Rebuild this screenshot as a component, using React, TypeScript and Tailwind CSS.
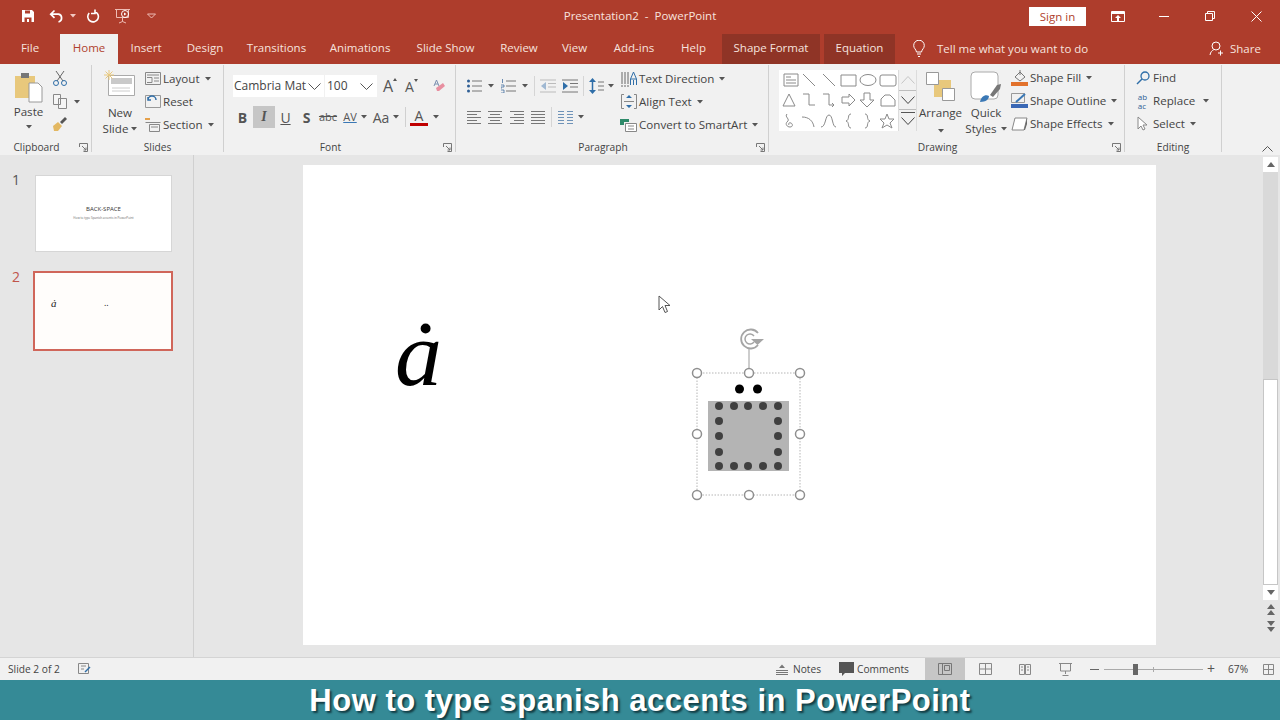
import type { ReactNode } from 'react';

const FONT = { fontFamily: '"Open Sans", "Noto Sans", sans-serif' };

const TABS = [
    { label: 'File', cls: 'w-[60px]' },
    { label: 'Home', cls: 'w-[58px] bg-[#f1f1f1] text-[#b03f2d] mr-[1px]' },
    { label: 'Insert', cls: 'w-[54px] mr-[2px]' },
    { label: 'Design', cls: 'w-[60px] mr-[2px]' },
    { label: 'Transitions', cls: 'w-[79px] mr-[2px]' },
    { label: 'Animations', cls: 'w-[84px] mr-[2px]' },
    { label: 'Slide Show', cls: 'w-[83px] mr-[2px]' },
    { label: 'Review', cls: 'w-[60px] mr-[1px]' },
    { label: 'View', cls: 'w-[49px] mr-[2px]' },
    { label: 'Add-ins', cls: 'w-[66px] mr-[2px]' },
    { label: 'Help', cls: 'w-[49px] mr-[4px]' },
    { label: 'Shape Format', cls: 'w-[98px] bg-[#8f3426] mr-[4px]' },
    { label: 'Equation', cls: 'w-[71px] bg-[#8f3426]' },
];

function Caret({ className = '', color = '#555' }: { className?: string; color?: string }) {
    return (
        <svg width="6" height="4" viewBox="0 0 6 4" className={`shrink-0 ${className}`}>
            <path d="M0 0h6L3 3.5z" fill={color} />
        </svg>
    );
}

function Launcher() {
    return (
        <svg width="9" height="9" viewBox="0 0 9 9" className="absolute right-[3px] bottom-0" fill="none" stroke="#777">
            <path d="M.5 4V.5H8.5V8.5H4.5M3 3l4 4M4.5 7H7V4.5" />
        </svg>
    );
}

function Group({ label, className, children, launcher }: { label: string; className: string; children: ReactNode; launcher?: boolean }) {
    return (
        <div className={`relative shrink-0 h-[87px] mt-[1px] border-r border-[#d0d0d0] flex flex-col ${className}`}>
            <div className="h-[75px] shrink-0 flex">{children}</div>
            <div className={`h-[15px] shrink-0 text-center text-[10.2px] leading-[15px] text-[#444] ${launcher ? 'pr-[18px]' : ''}`}>{label}</div>
            {launcher && <Launcher />}
        </div>
    );
}

function ListRow({ icon, label, caret = true, caretCls = 'ml-[5px]' }: { icon: ReactNode; label: string; caret?: boolean; caretCls?: string }) {
    return (
        <div className="h-[23px] flex items-center text-[11.6px] text-[#444] whitespace-nowrap">
            <span className="w-[19px] h-[18px] mr-[1px] flex items-center justify-center shrink-0">{icon}</span>
            <span>{label}</span>
            {caret && <Caret className={caretCls} />}
        </div>
    );
}

function Svg({ w, h, children, className = '' }: { w: number; h: number; children: ReactNode; className?: string }) {
    return (
        <svg width={w} height={h} viewBox={`0 0 ${w} ${h}`} fill="none" className={`shrink-0 ${className}`}>
            {children}
        </svg>
    );
}

function TitleBar() {
    return (
        <div className="h-[32px] flex items-center text-white">
            <div className="w-[400px] flex items-center pl-[21px]">
                <Svg w={14} h={14}>
                    <path d="M1 1h10l2 2v10H1z" fill="#fff" />
                    <path d="M4 1.5h5v3H4z" fill="#b03f2d" />
                    <path d="M3.5 8.5h7V13h-7z" fill="#b03f2d" />
                    <path d="M6 10h2v3H6z" fill="#fff" />
                </Svg>
                <Svg w={16} h={14} className="ml-[14px]">
                    <path d="M5.5 1.5L1.7 5.2l3.8 3.7M2 5.2h7.5a4 4 0 0 1 0 7.8" stroke="#fff" strokeWidth="1.7" />
                </Svg>
                <Caret className="ml-[5px]" color="#f2c9c2" />
                <Svg w={14} h={14} className="ml-[10px]">
                    <path d="M8.5 2.5A5.3 5.3 0 1 1 3.2 4M9 .5v4H5" stroke="#fff" strokeWidth="1.6" />
                </Svg>
                <Svg w={18} h={16} className="ml-[14px]">
                    <path d="M1 1.5h15M2.500 1.500v8h12v-8M8.500 9.500v4M5 15l3.500-1.500L12 15" stroke="#eebcb4" />
                    <circle cx="11" cy="6" r="3.5" stroke="#fff" />
                    <path d="M10 4.500l2.500 1.500-2.500 1.500z" fill="#fff" />
                </Svg>
                <Svg w={9} h={6} className="ml-[15px]">
                    <path d="M.5 1h8L4.500 5z" stroke="#eebcb4" />
                </Svg>
            </div>
            <div className="flex-1 text-center text-[11.5px] whitespace-pre text-[#f8e3df]">Presentation2  -  PowerPoint</div>
            <div className="w-[400px] flex items-center pl-[149px]">
                <div className="w-[57px] h-[19px] bg-white text-[#b03f2d] text-[11.5px] leading-[19px] text-center">Sign in</div>
                <Svg w={14} h={11} className="ml-[25px]">
                    <path d="M.5.5h13v10H.5z" stroke="#fff" />
                    <path d="M1 1h12v2H1zM7 4l3 3H8v3H6V7H4z" fill="#fff" />
                </Svg>
                <div className="w-[10px] h-[1px] bg-white ml-[34px]" />
                <Svg w={10} h={10} className="ml-[36px]">
                    <path d="M2.5 2.5V.5h7v7h-2M.5 2.5h7v7h-7z" stroke="#fff" />
                </Svg>
                <Svg w={11} h={11} className="ml-[36px]">
                    <path d="M.5.5l10 10M10.5.5l-10 10" stroke="#fff" />
                </Svg>
            </div>
        </div>
    );
}

function TabBar() {
    return (
        <div className="h-[32px] flex items-end text-[11.5px] text-[#f6e3df]">
            {TABS.map(tab => (
                <div key={tab.label} className={`h-[30px] leading-[28px] text-center shrink-0 ${tab.cls}`}>
                    {tab.label}
                </div>
            ))}
            <div className="h-[30px] flex items-center pb-[1px] pl-[18px]">
                <Svg w={12} h={18}>
                    <path d="M3.500 12C3 9 .7 8.500.7 5.500a5.300 5.300 0 0 1 10.600 0C11.300 8.500 9 9 8.500 12zM4 14h4M5 16.500h2" stroke="#fff" />
                </Svg>
                <span className="ml-[12px] w-[272px]">Tell me what you want to do</span>
                <Svg w={15} h={15}>
                    <circle cx="7" cy="5" r="4" stroke="#fff" />
                    <path d="M1 14c.5-3 2-4.500 3.500-5M9 12h5M11.500 9.500v5" stroke="#fff" />
                </Svg>
                <span className="ml-[6px]">Share</span>
            </div>
        </div>
    );
}

function FontRows() {
    return (
        <div className="pl-[9px] pt-[10px]">
            <div className="h-[22px] flex items-center">
                <div className="w-[91px] h-[22px] bg-white flex items-center justify-between px-[1px] text-[12px] text-[#444]">
                    <span>Cambria Mat</span>
                    <Svg w={13} h={7} className="mr-[2px]"><path d="M.5.5l6 6 6-6" stroke="#555" /></Svg>
                </div>
                <div className="w-[52px] h-[22px] ml-[1px] bg-white flex items-center justify-between px-[2px] text-[12px] text-[#444]">
                    <span>100</span>
                    <Svg w={13} h={7} className="mr-[2px]"><path d="M.5.5l6 6 6-6" stroke="#555" /></Svg>
                </div>
                <span className="ml-[6px] w-[20px] flex items-start text-[16px] text-[#555]">
                    A<Svg w={4} h={3} className="mt-[4px]"><path d="M0 3h4L2 0z" fill="#555" /></Svg>
                </span>
                <span className="ml-[2px] w-[20px] flex items-start text-[14px] text-[#555]">
                    A<Svg w={4} h={3} className="mt-[3px]"><path d="M0 0h4L2 3z" fill="#555" /></Svg>
                </span>
                <Svg w={14} h={14} className="ml-[7px]">
                    <path d="M2 7l2.500-6L7 7M3 5h3" stroke="#7a8fb0" />
                    <path d="M4 9l7-5 2 3-6 5H5z" fill="#e88fa0" />
                </Svg>
            </div>
            <div className="h-[22px] mt-[9px] flex items-center text-[#555] text-[14px]">
                <span className="w-[21px] ml-[-1px] text-center font-bold">B</span>
                <span className="w-[22px] h-[22px] leading-[22px] bg-[#c6c6c6] text-center italic font-bold" style={{ fontFamily: '"Liberation Serif", serif' }}>I</span>
                <span className="w-[21px] text-center underline">U</span>
                <span className="w-[21px] text-center font-bold">S</span>
                <span className="w-[22px] text-center text-[11px] line-through">abc</span>
                <span className="w-[22px] text-center text-[11px] underline decoration-[#3a78b5]">AV</span>
                <Caret />
                <span className="w-[24px] ml-[2px] text-center text-[14px]">Aa</span>
                <Caret />
                <span className="w-[1px] h-[20px] ml-[6px] mr-[4px] bg-[#d0d0d0]" />
                <span className="w-[18px] text-center leading-[15px] text-[14px] border-b-[3px] border-[#c00000]">A</span>
                <Caret className="ml-[5px]" />
            </div>
        </div>
    );
}

function Lines({ kind }: { kind: 'left' | 'center' | 'right' | 'justify' }) {
    const rows = [0, 1, 2, 3, 4];
    return (
        <Svg w={14} h={13}>
            {rows.map(i => {
                const short = i % 2 === 1 && kind !== 'justify';
                const x1 = short && kind === 'right' ? 4 : short && kind === 'center' ? 2 : 0;
                const x2 = short && kind === 'left' ? 10 : short && kind === 'center' ? 12 : 14;
                return <path key={i} d={`M${x1} ${i * 3 + 0.5}H${x2}`} stroke="#777" />;
            })}
        </Svg>
    );
}

function ParagraphRows() {
    return (
        <div className="w-[156px] shrink-0 pl-[11px] pt-[10px]">
            <div className="h-[22px] flex items-center">
                <Svg w={15} h={14}>
                    <path d="M5 2h10M5 7h10M5 12h10" stroke="#777" />
                    <circle cx="1.5" cy="2" r="1.5" fill="#2f5f95" />
                    <circle cx="1.5" cy="7" r="1.5" fill="#2f5f95" />
                    <circle cx="1.5" cy="12" r="1.5" fill="#2f5f95" />
                </Svg>
                <Caret className="ml-[6px]" />
                <Svg w={15} h={14} className="ml-[7px]">
                    <path d="M5 2h10M5 7h10M5 12h10" stroke="#777" />
                    <path d="M1.500 0v4M0 6h3v2H0v2M0 11h3v3H0" stroke="#2f5f95" strokeWidth=".7" />
                </Svg>
                <Caret className="ml-[6px]" />
                <span className="w-[1px] h-[20px] shrink-0 bg-[#d5d5d5] ml-[6px]" />
                <Svg w={16} h={14} className="ml-[5px]">
                    <path d="M0 1h16M8 4.500h8M8 8h8M0 13h16" stroke="#bbb" />
                    <path d="M6 3v8L1 7z" fill="#9fb8d2" />
                </Svg>
                <Svg w={16} h={14} className="ml-[6px]">
                    <path d="M0 1h16M8 4.500h8M8 8h8M0 13h16" stroke="#777" />
                    <path d="M1 3v8l5-4z" fill="#2f6ea8" />
                </Svg>
                <span className="w-[1px] h-[20px] shrink-0 bg-[#d5d5d5] ml-[5px]" />
                <Svg w={15} h={16} className="ml-[5px]">
                    <path d="M3.500 2v12" stroke="#2f6ea8" strokeWidth="1.5" />
                    <path d="M0 4l3.500-4L7 4zM0 12l3.500 4L7 12z" fill="#2f6ea8" />
                    <path d="M9 4h6M9 8h6M9 12h6" stroke="#777" />
                </Svg>
                <Caret className="ml-[4px]" />
            </div>
            <div className="h-[22px] mt-[9px] flex items-center">
                <Lines kind="left" />
                <span className="ml-[7px] flex"><Lines kind="center" /></span>
                <span className="ml-[8px] flex"><Lines kind="right" /></span>
                <span className="ml-[7px] flex"><Lines kind="justify" /></span>
                <span className="w-[1px] h-[20px] shrink-0 bg-[#d5d5d5] ml-[6px]" />
                <Svg w={15} h={13} className="ml-[6px]">
                    <path d="M0 .5h6M9 .5h6M0 3.500h6M9 3.500h6M0 6.500h6M9 6.500h6M0 9.500h6M9 9.500h6M0 12.500h6M9 12.500h6" stroke="#6f93b8" />
                </Svg>
                <Caret className="ml-[5px]" />
            </div>
        </div>
    );
}

const SHAPES = [
    'M3 2h14v12H3zM5 5h5M5 8h10M5 11h10',
    'M3 2l12 12',
    'M3 2l12 12',
    'M1 3h15v11H1z',
    'M1 8a8 5.500 0 1 0 16 0a8 5.500 0 1 0-16 0',
    'M3 3h12a2 2 0 0 1 2 2v7a2 2 0 0 1-2 2H3a2 2 0 0 1-2-2V5a2 2 0 0 1 2-2z',
    'M8 2l6 12H2z',
    'M3 2h6v11h6',
    'M3 2h6v11h5M12 11l2 2-2 2',
    'M2 5h7V2l6 6-6 6v-3H2z',
    'M5 1h6v7h4l-7 7-7-7h4z',
    'M6 3h5l5 5v6H2V7z',
    'M6 1C3 4 10 6 6 9c-2 2 0 5 3 5s3-3 1-4-3 1-2 2',
    'M2 4c7 0 11 4 12 10',
    'M1 14C6 14 5 2 9 2s3 12 7 12',
    'M11 1C7 1 10 7 6 8c4 1 1 7 5 7',
    'M6 1c4 0 1 6 5 7-4 1-1 7-5 7',
    'M8 1l2 5h5l-4 4 2 5-5-3-5 3 2-5-4-4h5z',
];

function ShapeGallery() {
    return (
        <div className="ml-[10px] mt-[5px] w-[138px] h-[61px] bg-white flex">
            <div className="w-[119px] grid grid-cols-6 grid-rows-3 pl-[1px]">
                {SHAPES.map((d, i) => (
                    <div key={i} className="flex items-center justify-center">
                        <svg width="18" height="16" viewBox="0 0 18 16" fill="none">
                            <path d={d} stroke="#8a8a8a" />
                        </svg>
                    </div>
                ))}
            </div>
            <div className="w-[19px] bg-[#f1f1f1] border-x border-[#dcdcdc] flex flex-col">
                <div className="h-[20px] flex items-center justify-center">
                    <Svg w={14} h={8}><path d="M.5 7.500l6.500-7 6.500 7" stroke="#c5c5c5" /></Svg>
                </div>
                <div className="h-[20px] flex items-center justify-center border-y border-[#bdbdbd]">
                    <Svg w={14} h={8}><path d="M.5.500l6.500 7 6.500-7" stroke="#444" /></Svg>
                </div>
                <div className="h-[21px] flex flex-col items-center pt-[2px]">
                    <div className="w-[14px] h-[1px] bg-[#555] mb-[4px]" />
                    <Svg w={14} h={8}><path d="M.5.500l6.500 7 6.500-7" stroke="#444" /></Svg>
                </div>
            </div>
        </div>
    );
}

function Ribbon() {
    return (
        <div className="h-[91px] bg-[#f1f1f1] flex relative">
            <Group label="Clipboard" className="w-[92px]" launcher>
                <div className="w-[53px] flex flex-col items-center text-[11.6px] text-[#444] pl-[4px]">
                    <Svg w={30} h={31} className="mt-[7px]">
                        <path d="M1 4h20v22H1z" fill="#e8c87c" />
                        <path d="M7 1h8v5H7z" fill="#777" />
                        <path d="M15 11h9l4 4v15H15z" fill="#fff" stroke="#999" />
                    </Svg>
                    <div className="mt-[1px] leading-[16px]">Paste</div>
                    <Caret className="mt-[5px]" />
                </div>
                <div className="flex flex-col pt-[6px] gap-[8px]">
                    <Svg w={14} h={15}>
                        <path d="M3 0l7 10M11 0L4 10" stroke="#666" />
                        <circle cx="3" cy="12" r="2.5" stroke="#2f6ea8" />
                        <circle cx="11" cy="12" r="2.5" stroke="#2f6ea8" />
                    </Svg>
                    <div className="flex items-center">
                        <Svg w={14} h={15}>
                            <path d="M.5.500h7v10h-7zM5.500 4.500h8v10h-8z" stroke="#888" fill="#f5f5f5" />
                        </Svg>
                        <Caret className="ml-[7px]" />
                    </div>
                    <Svg w={14} h={14}>
                        <path d="M0 9l5-4 4 4-4 5H1z" fill="#e3b862" />
                        <path d="M7 5l5-5 2 2-5 5z" fill="#555" />
                    </Svg>
                </div>
            </Group>
            <Group label="Slides" className="w-[132px]">
                <div className="w-[52px] pl-[4px] flex flex-col items-center text-[11.6px] text-[#444] leading-[16px]">
                    <Svg w={32} h={27} className="mt-[5px]">
                        <path d="M4.500 5.500h26v20h-26z" fill="#fff" stroke="#aaa" />
                        <path d="M7 8h21v6H7z" fill="#c9c9c9" />
                        <path d="M8 18h18M8 21h18" stroke="#ccc" />
                        <path d="M5 0v10M0 5h10M1.500 1.500l7 7M8.500 1.500l-7 7" stroke="#e8c87c" />
                    </Svg>
                    <div className="mt-[8px]">New</div>
                    <div className="flex items-center">Slide<Caret className="ml-[3px]" /></div>
                </div>
                <div className="pt-[2px] ml-[-1px]">
                    <ListRow label="Layout" icon={<Svg w={16} h={13}><path d="M.5.500h15v12H.500zM2 3h12M2 5.500h5v5H2M9 6h5M9 9h5" stroke="#888" /></Svg>} />
                    <ListRow label="Reset" caret={false} icon={<Svg w={16} h={13}><path d="M.5.500h15v12H.500z" stroke="#999" /><path d="M3 5a4 4 0 0 1 8 0M3 2v3h3" stroke="#2f6ea8" strokeWidth="1.5" /></Svg>} />
                    <ListRow label="Section" icon={<Svg w={16} h={14}><path d="M0 1h5" stroke="#e5a04a" strokeWidth="2" /><path d="M.5 4.500h15M4.500 6.500h10v7h-10zM6 9h7" stroke="#888" /></Svg>} />
                </div>
            </Group>
            <Group label="Font" className="w-[232px]" launcher>
                <FontRows />
            </Group>
            <Group label="Paragraph" className="w-[313px]" launcher>
                <ParagraphRows />
                <div className="pt-[2px] ml-[7px]">
                    <ListRow label="Text Direction" icon={<Svg w={16} h={16}><path d="M1 1v12M4 1v12M7 1v12" stroke="#666" /><path d="M0 15h9" stroke="#666" strokeDasharray="2 1" /><path d="M9.500 14v-6l3-7 3 7v6M10 8h5M12.500 9v5" stroke="#2f6ea8" /></Svg>} />
                    <ListRow label="Align Text" icon={<Svg w={16} h={15}><path d="M3 .5H.5v14H3M13 .5h2.500v14H13M3 7.500h10" stroke="#888" /><path d="M8 1l3 3H5zM8 14l3-3H5z" fill="#2f6ea8" /></Svg>} />
                    <ListRow label="Convert to SmartArt" icon={<Svg w={17} h={14}><path d="M0 1h9v3H4v3H0z" fill="#2e8a6a" /><path d="M5.500 5.500h11v8h-11zM8 8h6M8 11h6" stroke="#888" fill="#fff" /></Svg>} />
                </div>
            </Group>
            <Group label="Drawing" className="w-[356px]" launcher>
                <ShapeGallery />
                <div className="w-[49px] ml-[-1px] flex flex-col items-center text-[11.6px] text-[#444] leading-[16px]">
                    <Svg w={29} h={29} className="mt-[7px]">
                        <path d="M8 8h17v17H8z" fill="#e8c87c" />
                        <path d="M.5.500h12v12H.500zM16.500 16.500h12v12h-12z" fill="#fff" stroke="#999" />
                    </Svg>
                    <div className="mt-[4px]">Arrange</div>
                    <Caret className="mt-[8px]" />
                </div>
                <div className="w-[42px] flex flex-col items-center text-[11.6px] text-[#444] leading-[16px]">
                    <Svg w={32} h={32} className="mt-[6px]">
                        <path d="M5 1h19a4 4 0 0 1 4 4v19a4 4 0 0 1-4 4H5a4 4 0 0 1-4-4V5a4 4 0 0 1 4-4z" fill="#fff" stroke="#aaa" />
                        <path d="M10 31c1-5 5-8 9-6 0 3-3 6-9 6z" fill="#3a78b5" />
                        <path d="M20 24l7-10 4-1-1 5-7 8z" fill="#777" />
                    </Svg>
                    <div className="mt-[2px]">Quick</div>
                    <div className="flex items-center">Styles<Caret className="ml-[4px]" /></div>
                </div>
                <div className="ml-[3px] pt-[1px]">
                    <ListRow label="Shape Fill" icon={<Svg w={17} h={16}><path d="M4 7l5-5 5 5-5 4zM9 5V0" stroke="#777" /><path d="M0 12h17v4H0z" fill="#e2722c" /></Svg>} />
                    <ListRow label="Shape Outline" icon={<Svg w={17} h={15}><path d="M.5.500h13v9H.500z" stroke="#999" /><path d="M5 9l9-8" stroke="#3a78b5" strokeWidth="2" /><path d="M0 11h17v4H0z" fill="#3a68b5" /></Svg>} />
                    <ListRow label="Shape Effects" icon={<Svg w={17} h={14}><path d="M4 1h12l-3 12H1z" fill="#fff" stroke="#888" /><path d="M13 13l3-12v6l-2 6z" fill="#666" /></Svg>} />
                </div>
            </Group>
            <Group label="Editing" className="w-[97px]">
                <div className="pl-[8px] pt-[1px]">
                    <ListRow label="Find" caret={false} icon={<Svg w={14} h={14}><circle cx="9" cy="5" r="4" stroke="#2f6ea8" strokeWidth="1.3" /><path d="M6 8l-5 5" stroke="#2f6ea8" strokeWidth="1.5" /></Svg>} />
                    <ListRow label="Replace" caretCls="ml-[8px]" icon={<span className="text-[8px] leading-[9px] text-[#2f5f95]">ab<br />ac</span>} />
                    <ListRow label="Select" icon={<Svg w={11} h={15}><path d="M1 1v12l3-3 2 4 2-1-2-4h4z" fill="#fff" stroke="#888" /></Svg>} />
                </div>
            </Group>
            <Svg w={11} h={6} className="absolute left-[1262px] bottom-[3px]">
                <path d="M.5 5.500l5-5 5 5" stroke="#555" />
            </Svg>
        </div>
    );
}

function Thumbnails() {
    return (
        <div className="w-[194px] shrink-0 border-r border-[#d0d0d0] pt-[20px] text-[14px] leading-[16px]">
            <div className="flex h-[96px]">
                <span className="ml-[12px] w-[23px] mt-[-3px] text-[#555]">1</span>
                <div className="w-[137px] h-[77px] bg-white border border-[#d6d6d6] flex flex-col items-center pt-[29px]">
                    <div className="text-[6px] leading-[8px] text-[#333]">BACK-SPACE</div>
                    <div className="text-[3px] leading-[5px] mt-[3px] text-[#666]">How to type Spanish accents in PowerPoint</div>
                </div>
            </div>
            <div className="flex">
                <span className="ml-[12px] w-[21px] mt-[-2px] text-[#c0544a]">2</span>
                <div className="relative w-[140px] h-[80px] bg-[#fffdfb] border-2 border-[#d0665a]">
                    <span className="absolute left-[16px] top-[22px] text-[11px] italic text-[#222]" style={{ fontFamily: '"Liberation Serif", serif' }}>ȧ</span>
                    <span className="absolute left-[69px] top-[22px] text-[9px] text-[#222]">..</span>
                </div>
            </div>
        </div>
    );
}

function Selection() {
    const handles = [
        [12, 38], [64, 38], [115, 38],
        [12, 99], [115, 99],
        [12, 160], [64, 160], [115, 160],
    ];
    const top = [34, 49, 63, 78, 93];
    const side = [86, 101, 117];
    return (
        <svg width="130" height="215" viewBox="0 -40 130 215" fill="none" className="absolute left-[382px] top-[130px]">
            <path d="M12 38H115V160H12z" stroke="#b5b5b5" strokeDasharray="1.5 1.5" />
            <path d="M64 14V38" stroke="#bcbcbc" strokeWidth="1.5" />
            <path d="M23 66h81v70H23z" fill="#b4b4b4" />
            {top.map(x => <circle key={x} cx={x} cy={71} r="4" fill="#404040" />)}
            {top.map(x => <circle key={x} cx={x} cy={131} r="4" fill="#404040" />)}
            {side.map(y => <circle key={y} cx={34} cy={y} r="4" fill="#404040" />)}
            {side.map(y => <circle key={y} cx={93} cy={y} r="4" fill="#404040" />)}
            <circle cx="54.5" cy="54" r="4.5" fill="#000" />
            <circle cx="72.5" cy="54" r="4.5" fill="#000" />
            {handles.map(([x, y]) => <circle key={`${x}-${y}`} cx={x} cy={y} r="4.5" fill="#fff" stroke="#8f8f8f" strokeWidth="1.5" />)}
            <path d="M73 -2a9.500 9.500 0 1 0 0 12" stroke="#a5a5a5" strokeWidth="1.8" />
            <path d="M69 1a5 5 0 1 0 0 6" stroke="#a5a5a5" strokeWidth="1.5" />
            <path d="M66 4h13l-6.500 6z" fill="#a5a5a5" />
        </svg>
    );
}

function Scrollbar() {
    return (
        <div className="w-[17px] shrink-0 pt-[2px] flex flex-col">
            <div className="w-[15px] h-[15px] bg-white flex items-center justify-center">
                <Svg w={8} h={5}><path d="M0 5h8L4 0z" fill="#666" /></Svg>
            </div>
            <div className="w-[15px] h-[207px] bg-[#d9d9d9]" />
            <div className="w-[15px] h-[206px] bg-white border border-[#c6c6c6]" />
            <div className="w-[15px] h-[15px] bg-white flex items-center justify-center">
                <Svg w={8} h={5}><path d="M0 0h8L4 5z" fill="#666" /></Svg>
            </div>
            <div className="w-[15px] mt-[4px] flex flex-col items-center gap-[6px]">
                <Svg w={8} h={11}><path d="M0 5h8L4 0zM0 11h8L4 6z" fill="#666" /></Svg>
                <Svg w={8} h={11}><path d="M0 0h8L4 5zM0 6h8L4 11z" fill="#666" /></Svg>
            </div>
        </div>
    );
}

function Workspace() {
    return (
        <div className="h-[503px] bg-[#e6e6e6] flex border-b border-[#d4d4d4]">
            <Thumbnails />
            <div className="flex-1 pl-[109px] pt-[10px]">
                <div className="relative w-[853px] h-[480px] bg-white">
                    <span className="absolute left-[92px] top-[133px] text-[94px] leading-[110px] italic text-black" style={{ fontFamily: '"Liberation Serif", serif' }}>ȧ</span>
                    <Svg w={14} h={20} className="absolute left-[355px] top-[130px]">
                        <path d="M1 1v14l3.500-3.500 2.500 6 2.500-1-2.500-6h5z" fill="#fff" stroke="#555" />
                    </Svg>
                    <Selection />
                </div>
            </div>
            <Scrollbar />
        </div>
    );
}

function StatusBar() {
    return (
        <div className="h-[22px] bg-[#f1f1f1] flex items-center text-[10.2px] text-[#444]">
            <span className="ml-[8px] w-[70px] mt-[1px]">Slide 2 of 2</span>
            <Svg w={13} h={12}>
                <path d="M.5.500h10v10H.500zM3 3h5M3 6h3" stroke="#888" />
                <path d="M7 9l5-5" stroke="#2f6ea8" strokeWidth="1.5" />
            </Svg>
            <Svg w={12} h={11} className="ml-[685px]">
                <path d="M0 6.500h12M0 8.500h12M0 10.500h12" stroke="#777" />
                <path d="M3 4l3-3.500L9 4z" fill="#777" />
            </Svg>
            <span className="ml-[5px] w-[46px] mt-[1px]">Notes</span>
            <Svg w={15} h={14}>
                <path d="M0 0h15v11H6l-3 3v-3H0z" fill="#555" />
            </Svg>
            <span className="ml-[3px] w-[68px] mt-[1px]">Comments</span>
            <div className="w-[40px] h-[22px] bg-[#c6c6c6] flex items-center justify-center">
                <Svg w={14} h={12}><path d="M.5.500h13v11H.500zM4.500.500v11M6.500 2.500h5v5h-5z" stroke="#777" /></Svg>
            </div>
            <Svg w={13} h={12} className="ml-[14px]"><path d="M.5.500h12v11H.500zM6.500.500v11M.5 6h12" stroke="#888" /></Svg>
            <Svg w={12} h={12} className="ml-[27px]"><path d="M.5 1.500h5v10h-5zM6.500 1.500h5v10h-5zM2 4h2M2 7h2M8 4h2M8 7h2" stroke="#888" /></Svg>
            <Svg w={13} h={13} className="ml-[28px]"><path d="M0 .5h13M1.500 1v7h10V1M6.500 8v3M3.500 12.500h6" stroke="#888" /></Svg>
            <div className="w-[9px] h-[1px] bg-[#666] ml-[18px]" />
            <div className="relative w-[99px] h-[1px] bg-[#aaa] ml-[5px]">
                <div className="absolute left-[29px] top-[-5px] w-[5px] h-[11px] bg-[#666]" />
                <div className="absolute left-[49px] top-[-2px] w-[1px] h-[5px] bg-[#aaa]" />
            </div>
            <span className="ml-[4px] w-[21px] text-[14px] text-[#555] leading-[14px]">+</span>
            <span className="w-[35px] mt-[1px]">67%</span>
            <Svg w={11} h={11}><path d="M.5.500h10v10H.500zM.5 5.500h10M5.500.500v10" stroke="#888" /></Svg>
        </div>
    );
}

export default function App() {
    return (
        <div className="w-[1280px] h-[720px] overflow-hidden bg-[#ae3d2c]" style={FONT}>
            <TitleBar />
            <TabBar />
            <Ribbon />
            <Workspace />
            <StatusBar />
            <div
                className="h-[40px] bg-[#358a96] text-center text-[31px] leading-[41px] font-bold text-white tracking-[0.5px] [text-shadow:2px_2px_2px_#123c44]"
                style={{ fontFamily: '"Liberation Sans", sans-serif' }}
            >
                How to type spanish accents in PowerPoint
            </div>
        </div>
    );
}
